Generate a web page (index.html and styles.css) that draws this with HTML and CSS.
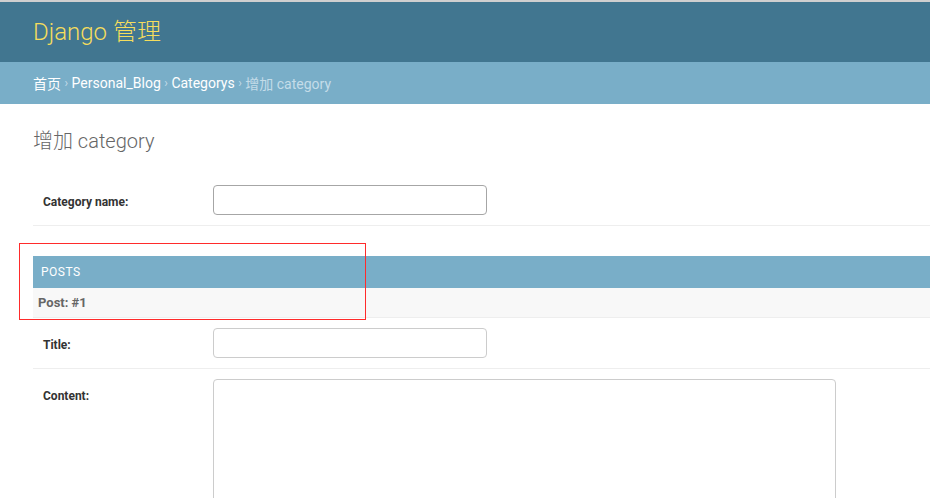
FILE: index.html
```html
<!DOCTYPE html>
<html lang="zh-Hans">
<head>
  <meta charset="UTF-8" />
  <meta name="viewport" content="width=device-width, initial-scale=1.0"/>
  <title>增加 category | Django 站点管理员</title>

  <link rel="stylesheet" href="styles.css">
</head>

<body>

<!-- HEADER -->
<header class="header">
  <h1 class="branding">Django 管理</h1>
</header>

<!-- BREADCRUMBS -->
<div class="breadcrumbs">
  <a href="#">首页</a>
  <span class="sep">›</span>
  <a href="#">Personal_Blog</a>
  <span class="sep">›</span>
  <a href="#">Categorys</a>
  <span class="sep">›</span>
  <span class="current">增加 category</span>
</div>

<!-- CONTENT -->
<div class="content">
  <h1 class="page-title">增加 category</h1>

  <form>
    <div class="form-row">
      <label for="id_name">Category name:</label>
      <input type="text" id="id_name" class="field-name">
    </div>

    <div class="module">
      <h2>Posts</h2>
      <h3>Post: #1</h3>

      <div class="form-row">
        <label for="id_title">Title:</label>
        <input type="text" id="id_title" class="field-title">
      </div>

      <div class="form-row">
        <label for="id_content">Content:</label>
        <textarea id="id_content"></textarea>
      </div>

      <!-- red annotation box drawn over the inline header -->
      <div class="note-box"></div>
    </div>
  </form>
</div>

</body>
</html>
```

FILE: styles.css
```css
*{
  margin:0;
  padding:0;
  box-sizing:border-box;
}

body{
  background:#fff;
  color:#333;
  font-family: Roboto, "Noto Sans CJK SC", sans-serif;
  border-top:2px solid #cfcfcf;
  overflow:hidden;
}

.header{
  background:#417690;
  height:60px;
  padding:0 33px;
  display:flex;
  align-items:center;
}

.branding{
  color:#f5dd5d;
  font-size:24px;
  font-weight:300;
  line-height:28px;
}

.breadcrumbs{
  background:#79aec8;
  height:42px;
  padding:0 33px;
  display:flex;
  align-items:center;
  gap:3.5px;
  font-size:14px;
  color:#fff;
}

.breadcrumbs a{
  color:#fff;
  text-decoration:none;
}

.breadcrumbs .sep{
  font-size:12px;
  color:#c4dce8;
}

.breadcrumbs .current{
  color:#c4dce8;
}

.content{
  padding-left:33px;
}

.page-title{
  margin:25px 0 22px;
  font-size:20px;
  line-height:24px;
  font-weight:300;
  color:#666;
}

.form-row{
  display:flex;
  align-items:flex-start;
  padding:10px;
  border-bottom:1px solid #eee;
}

.form-row label{
  width:170px;
  flex-shrink:0;
  padding-top:9px;
  font-size:12px;
  line-height:16px;
  font-weight:bold;
  color:#333;
}

.form-row input{
  width:274px;
  height:30px;
  border:1px solid #ccc;
  border-radius:4px;
  background:#fff;
}

.form-row .field-name{
  border-color:#a6a6a6;
}

.form-row textarea{
  width:623px;
  height:160px;
  border:1px solid #ccc;
  border-radius:4px;
  resize:none;
}

.module{
  margin-top:30px;
  position:relative;
}

.module h2{
  background:#79aec8;
  height:32px;
  padding:0 8px;
  display:flex;
  align-items:center;
  font-size:12px;
  font-weight:400;
  letter-spacing:0.5px;
  text-transform:uppercase;
  color:#fff;
}

.module h3{
  background:#f8f8f8;
  height:30px;
  padding:0 5px;
  display:flex;
  align-items:center;
  border-bottom:1px solid #eee;
  font-size:13px;
  font-weight:bold;
  color:#666;
}

.note-box{
  position:absolute;
  z-index:2;
  left:-14px;
  top:-13px;
  width:347px;
  height:77px;
  border:1px solid #ff2b2b;
  background:transparent;
  pointer-events:none;
}
```
